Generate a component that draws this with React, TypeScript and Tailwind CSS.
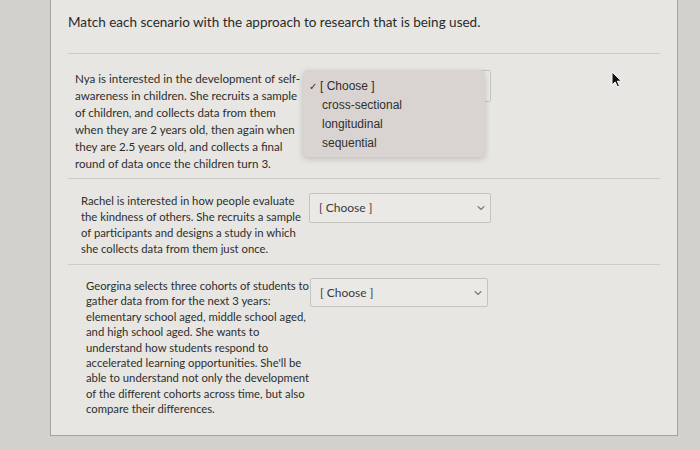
import { ChevronDown } from "lucide-react"

const Line = ({ children }: { children: string }) => <span className="block whitespace-nowrap">{children}</span>

const Select = ({ className, label = true }: { className: string; label?: boolean }) => (
	<div className={`flex items-center justify-between border border-[#c6c4c0] bg-[#eae9e5] rounded-[2px] pl-[9px] pr-[3px] ${className}`}>
		{label ? <span className="text-[12px] text-[#3a3a3a]">[ Choose ]</span> : <span />}
		<ChevronDown size={12} strokeWidth={2.2} className="text-[#7c7b78]" />
	</div>
)

export default function App() {
	const row1 = [
		"Nya is interested in the development of self-",
		"awareness in children. She recruits a sample",
		"of children, and collects data from them",
		"when they are 2 years old, then again when",
		"they are 2.5 years old, and collects a final",
		"round of data once the children turn 3.",
	]
	const row2 = [
		"Rachel is interested in how people evaluate",
		"the kindness of others. She recruits a sample",
		"of participants and designs a study in which",
		"she collects data from them just once.",
	]
	const row3 = [
		"Georgina selects three cohorts of students to",
		"gather data from for the next 3 years:",
		"elementary school aged, middle school aged,",
		"and high school aged. She wants to",
		"understand how students respond to",
		"accelerated learning opportunities. She'll be",
		"able to understand not only the development",
		"of the different cohorts across time, but also",
		"compare their differences.",
	]
	return (
		<div className="w-[700px] h-[450px] bg-[#d3d1cd] overflow-hidden relative font-['Lato','Liberation_Sans',sans-serif]">
			<div className="ml-[50px] w-[628px] h-[436px] bg-[#e7e6e2] border-l border-r border-b border-[#a6a4a0] pt-[13px] px-[17px]">
				<h1 className="text-[13.5px] leading-[18px] text-[#2a2a2a]">
					Match each scenario with the approach to research that is being used.
				</h1>
				<div className="mt-[22px] border-t border-[#cdcbc7]" />

				<div className="flex pt-[16px] pb-[6px]">
					<div className="w-[238px] pl-[7px] text-[11.6px] leading-[17px] text-[#2e2e2e]">
						{row1.map((l) => <Line key={l}>{l}</Line>)}
					</div>
					<div className="relative">
						<Select className="w-[185px] h-[32px]" label={false} />
						<div className="absolute left-[-3px] top-0 w-[182px] h-[87px] bg-[#d9d4d1] rounded-[5px] shadow-[0_2px_6px_rgba(0,0,0,0.18)] pt-[7px] pl-[6px] font-['Liberation_Sans',sans-serif] text-[12px] text-[#2f2f2f] leading-[19px]">
							<div className="flex items-center gap-[3px]">
								<span className="text-[10px] leading-[19px]">✓</span>
								<span>[ Choose ]</span>
							</div>
							<div className="pl-[13px]">cross-sectional</div>
							<div className="pl-[13px]">longitudinal</div>
							<div className="pl-[13px]">sequential</div>
						</div>
					</div>
				</div>
				<div className="border-t border-[#cdcbc7]" />

				<div className="flex pt-[14px] pb-[7px]">
					<div className="w-[241px] pl-[13px] text-[11.3px] leading-[16px] text-[#2e2e2e]">
						{row2.map((l) => <Line key={l}>{l}</Line>)}
					</div>
					<Select className="w-[182px] h-[30px]" />
				</div>
				<div className="border-t border-[#cdcbc7]" />

				<div className="flex pt-[13px]">
					<div className="w-[242px] pl-[18px] text-[11.3px] leading-[15.4px] text-[#2e2e2e]">
						{row3.map((l) => <Line key={l}>{l}</Line>)}
					</div>
					<Select className="w-[178px] h-[29px]" />
				</div>
			</div>

			<svg className="absolute left-[611px] top-[71px]" width="12" height="17" viewBox="0 0 12 17">
				<path d="M1 1 L1 14 L4.2 11 L6.5 16 L8.5 15 L6.3 10.2 L10.5 10.2 Z" fill="#111" stroke="#fff" strokeWidth="1" />
			</svg>
		</div>
	)
}
